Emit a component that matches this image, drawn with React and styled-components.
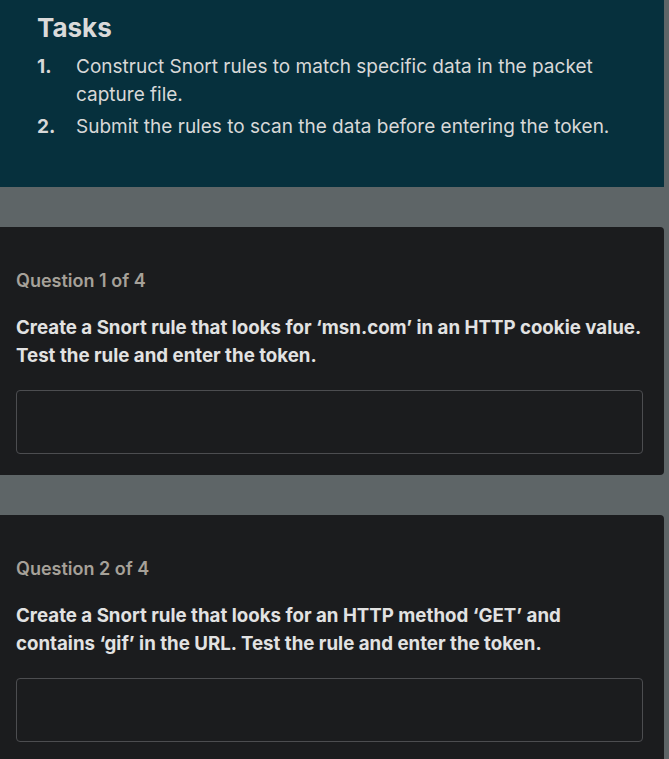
import React from "react"
import styled, { createGlobalStyle } from "styled-components"

const GlobalStyle = createGlobalStyle`
  html, body {
    margin: 0;
    padding: 0;
    background: #5e6567;
  }
  body {
    font-family: Inter, "Noto Sans", "Liberation Sans", sans-serif;
    -webkit-font-smoothing: antialiased;
  }
`

const questions = [
  {
    id: 1,
    text: "Create a Snort rule that looks for \u2018msn.com\u2019 in an HTTP cookie value. Test the rule and enter the token.",
  },
  {
    id: 2,
    text: "Create a Snort rule that looks for an HTTP method \u2018GET\u2019 and contains \u2018gif\u2019 in the URL. Test the rule and enter the token.",
  },
]

const tasks = [
  "Construct Snort rules to match specific data in the packet capture file.",
  "Submit the rules to scan the data before entering the token.",
]

function App() {
  return (
    <Page>
      <GlobalStyle />
      <TasksPanel>
        <h2>Tasks</h2>
        <TaskList>
          {tasks.map((t, i) => (
            <TaskItem key={i}>
              <span className="num">{i + 1}.</span>
              <span>{t}</span>
            </TaskItem>
          ))}
        </TaskList>
      </TasksPanel>
      {questions.map((q) => (
        <QuestionCard key={q.id}>
          <Label>Question {q.id} of 4</Label>
          <Prompt>{q.text}</Prompt>
          <TokenInput type="text" />
        </QuestionCard>
      ))}
    </Page>
  )
}

const Page = styled.div`
  width: 664px;
  display: flex;
  flex-direction: column;
  gap: 40px;
`

const TasksPanel = styled.section`
  background: #06303d;
  padding: 12px 37px 46px 37px;
  color: #d8d8d8;

  h2 {
    margin: 0;
    font-size: 26px;
    line-height: 32px;
    font-weight: 700;
    color: #dadada;
  }
`

const TaskList = styled.ol`
  list-style: none;
  margin: 9px 0 0;
  padding: 0;
  display: flex;
  flex-direction: column;
  gap: 4px;
`

const TaskItem = styled.li`
  display: grid;
  grid-template-columns: 39px 1fr;
  font-size: 19px;
  line-height: 28px;
  font-weight: 400;

  .num {
    font-weight: 700;
  }
`

const QuestionCard = styled.section`
  background: #1b1c1e;
  border-radius: 0 4px 4px 0;
  padding: 42px 21px 21px 16px;
  display: flex;
  flex-direction: column;
`

const Label = styled.div`
  font-size: 18px;
  line-height: 24px;
  font-weight: 600;
  color: #a6a199;
`

const Prompt = styled.p`
  margin: 21px 0 20px;
  font-size: 18.7px;
  line-height: 28px;
  font-weight: 700;
  color: #e2e2e2;
`

const TokenInput = styled.input`
  box-sizing: border-box;
  width: 100%;
  height: 64px;
  background: transparent;
  border: 1px solid #4c4d50;
  border-radius: 4px;
  outline: none;
  color: #e2e2e2;
  font: inherit;
  padding: 0 12px;
`

export default App
